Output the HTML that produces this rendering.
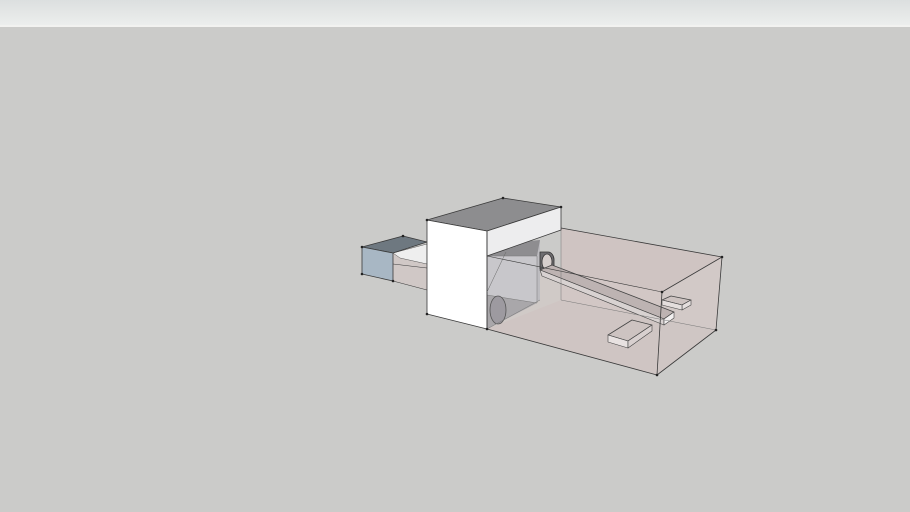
<!DOCTYPE html>
<html><head><style>
html,body{margin:0;padding:0;width:910px;height:512px;overflow:hidden;background:#cbcbc9}
.top{position:absolute;left:0;top:0;width:910px;height:25px;background:linear-gradient(#dcdfdf,#eceeed)}
.line{position:absolute;left:0;top:25px;width:910px;height:2px;background:#f2f2f0}
svg{position:absolute;left:0;top:0}
</style></head><body>
<div class="top"></div><div class="line"></div>
<svg width="910" height="512" viewBox="0 0 910 512" stroke="#3a3a3a" stroke-width="0.8" stroke-linejoin="round">
<polygon points="487,329 561,300 716,330 657,375" fill="#c9bfbd" stroke="none"/>
<polygon points="561,228 722,257 716,330 561,300" fill="#cfc4c2" stroke="none"/>
<polygon points="487,256 662,292 657,375 487,329" fill="#d3c9c7" fill-opacity="0.6" stroke="none"/>
<polygon points="662,292 722,257 716,330 657,375" fill="#d6cdcb" fill-opacity="0.5" stroke="none"/>
<polygon points="487,256 510,243 540,240 540,300 487,329" fill="#bdbcc0" stroke="none"/>
<polygon points="487,256 510,243 540,240 537,256" fill="#8e8d90" stroke="none"/>
<polygon points="487,295 537,303 487,329" fill="#a9a7aa" stroke="none"/>
<polygon points="487,256 537,256 537,303 487,295" fill="#c8c7cb" stroke="#777" stroke-width="0.5"/>
<ellipse cx="498" cy="310" rx="8" ry="14" fill="#9d9aa0" stroke="#555"/>
<path d="M540,252 h8 a6,8 0 0 1 6,9 v8 h-14 z" fill="#6e6d70" stroke="#333"/>
<ellipse cx="547" cy="262" rx="5" ry="8" fill="#d6cfcd" stroke="#333"/>
<!-- pads -->
<polygon points="608,335 628,341 652,325 632,320" fill="#cdc3c1" stroke="#444"/>
<polygon points="608,335 608,342 628,348 628,341" fill="#e8e2e1" stroke="#444" stroke-width="0.6"/>
<polygon points="628,341 652,325 652,331 628,348" fill="#d8d0cf" stroke="#444" stroke-width="0.6"/>
<polygon points="662,300 671,296 691,300 682,305" fill="#cdc3c1" stroke="#444"/>
<polygon points="682,305 691,300 691,305 682,310" fill="#e4dedd" stroke="#444" stroke-width="0.6"/>
<polygon points="662,305 682,310 682,305 662,300" fill="#e4dedd" stroke="#444" stroke-width="0.6"/>
<!-- ramp -->
<polygon points="540,270 552,265 674,312 664,319" fill="#bdb3b2" stroke="#444"/>
<polygon points="540,270 664,319 664,325 542,276" fill="#d8d2d1" stroke="#444" stroke-width="0.6"/>
<polygon points="664,319 674,312 674,318 664,325" fill="#f2f0f0" stroke="#444" stroke-width="0.6"/>
<polyline points="561,228 722,257 716,330 657,375 487,329" fill="none"/>
<line x1="662" y1="292" x2="722" y2="257"/>
<line x1="662" y1="292" x2="657" y2="375"/>
<line x1="487" y1="256" x2="662" y2="292" stroke-width="0.6"/>
<line x1="561" y1="228" x2="561" y2="300" stroke="#777" stroke-width="0.5"/>
<line x1="561" y1="300" x2="716" y2="330" stroke="#777" stroke-width="0.5"/>
<line x1="487" y1="329" x2="540" y2="300" stroke="#777" stroke-width="0.5"/>
<polygon points="393,253 427,248 427,290 393,281" fill="#d0c8c6" stroke="none"/>
<polygon points="393,253 427,244 427,264 400,258" fill="#eeeeee" stroke="#555" stroke-width="0.5"/>
<polygon points="362,247 403,236 427,242 393,253" fill="#6e7880"/>
<polygon points="362,247 393,253 393,281 362,274" fill="#a8b7c4"/>
<line x1="393" y1="281" x2="427" y2="290" stroke-width="0.6"/>
<line x1="393" y1="264" x2="427" y2="268" stroke-width="0.5"/>
<polygon points="427,220 503,198 561,207 487,231" fill="#8d8d8f"/>
<polygon points="427,220 487,231 487,329 427,314" fill="#ffffff"/>
<polygon points="487,231 561,207 561,230 487,256" fill="#ededee"/>
<line x1="487" y1="231" x2="487" y2="329"/>
<line x1="506" y1="252" x2="487" y2="292" stroke="#666" stroke-width="0.5"/>
<g fill="#222" stroke="none">
<circle cx="427" cy="220" r="1.3"/><circle cx="503" cy="198" r="1.3"/><circle cx="561" cy="207" r="1.3"/>
<circle cx="427" cy="314" r="1.3"/><circle cx="487" cy="329" r="1.3"/><circle cx="722" cy="257" r="1.3"/>
<circle cx="716" cy="330" r="1.3"/><circle cx="657" cy="375" r="1.3"/><circle cx="662" cy="292" r="1.3"/>
<circle cx="362" cy="247" r="1.3"/><circle cx="403" cy="236" r="1.3"/><circle cx="362" cy="274" r="1.3"/><circle cx="393" cy="281" r="1.3"/>
</g>
</svg>
</body></html>
